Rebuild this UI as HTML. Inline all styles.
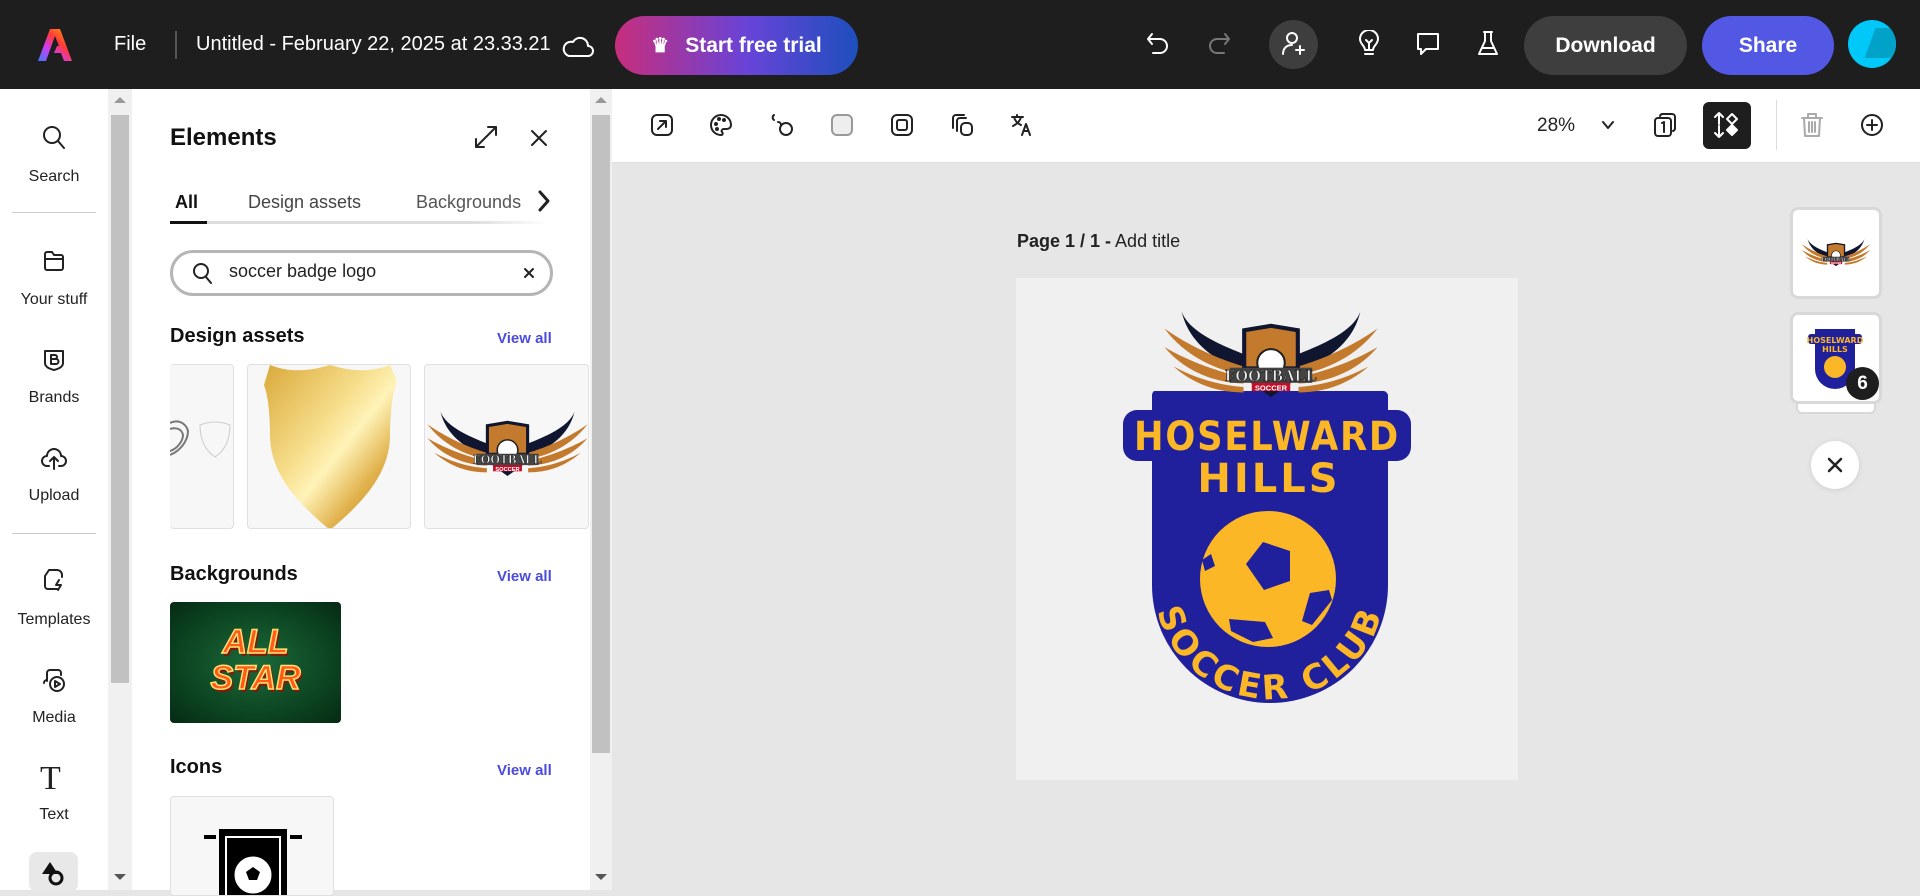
<!DOCTYPE html>
<html><head><meta charset="utf-8">
<style>
*{box-sizing:border-box;margin:0;padding:0}
body{width:1920px;height:890px;overflow:hidden;background:#e6e6e6;font-family:"Liberation Sans",sans-serif;position:relative;color:#222}
.a{position:absolute}
.top{left:0;top:0;width:1920px;height:89px;background:#1e1e1e}
.wt{color:#fff;font-size:20px}
.pill{border-radius:30px;height:59px;top:16px;display:flex;align-items:center;justify-content:center;color:#fff;font-size:21px;font-weight:bold}
.tb{left:612px;top:89px;width:1308px;height:74px;background:#fff;border-bottom:1px solid #ddd}
.rail{left:0;top:89px;width:108px;height:801px;background:#fff}
.lbl{width:108px;text-align:center;font-size:16px;color:#222}
.sb{background:#f0f0f0;width:24px}
.th{background:#c1c1c1}
.panel{left:132px;top:89px;width:458px;height:801px;background:#fff}
.h{font-size:20px;font-weight:bold;color:#111}
.va{font-size:15px;color:#4b4bdc;font-weight:bold}
.card{background:#f7f7f7;border:1px solid #e0e0e0;border-radius:4px;overflow:hidden}
svg.i{position:absolute;fill:none;stroke:#222;stroke-width:2;stroke-linecap:round;stroke-linejoin:round}
</style></head><body>
<svg width="0" height="0" style="position:absolute">
<defs>
<symbol id="emb" viewBox="0 0 320 130">
<path d="M30 0 C40 30 90 50 120 62 L118 84 C80 74 40 45 30 0Z" fill="#101530"/>
<path d="M290 0 C280 30 230 50 200 62 L202 84 C240 74 280 45 290 0Z" fill="#101530"/>
<path d="M5 25 C40 50 85 70 120 80 L120 92 C80 86 35 65 5 25Z M5 52 C45 75 85 88 120 96 L120 105 C80 104 35 88 5 52Z M18 80 C55 100 90 108 120 110 L120 118 C85 118 50 108 18 80Z" fill="#c47a2c"/>
<path d="M315 25 C280 50 235 70 200 80 L200 92 C240 86 285 65 315 25Z M315 52 C275 75 235 88 200 96 L200 105 C240 104 285 88 315 52Z M302 80 C265 100 230 108 200 110 L200 118 C235 118 270 108 302 80Z" fill="#c47a2c"/>
<path d="M118 25 L160 18 L202 25 L202 95 L160 125 L118 95Z" fill="#101530"/>
<path d="M124 30 L160 24 L196 30 L196 80 L124 80Z" fill="#c47a2c"/>
<circle cx="160" cy="75" r="20" fill="#fff" stroke="#222" stroke-width="3"/>
<rect x="100" y="82" width="120" height="22" fill="#444"/>
<text x="160" y="101" text-anchor="middle" font-family="Liberation Serif" font-weight="bold" font-size="24" fill="#eee" stroke="#222" stroke-width="1">FOOTBALL</text>
<rect x="132" y="104" width="56" height="12" fill="#c0102a"/>
<text x="160" y="115" text-anchor="middle" font-family="Liberation Sans" font-weight="bold" font-size="11" fill="#fff">SOCCER</text>
</symbol>
</defs></svg>

<!-- TOP BAR -->
<div class="a top"></div>
<svg class="a" style="left:36px;top:27px" width="38" height="36" viewBox="0 0 38 36"><defs><linearGradient id="lg" x1="0" y1="1" x2="1" y2="0"><stop offset="0" stop-color="#3d7bff"/><stop offset=".35" stop-color="#d23cf0"/><stop offset=".6" stop-color="#ff3a3a"/><stop offset="1" stop-color="#ffb400"/></linearGradient></defs><path d="M14 2h10l12 32h-8l-3-8h-7l3-7h2l-4-10-9 25H2Z" fill="url(#lg)"/></svg>
<div class="a wt" style="left:114px;top:33px">File</div>
<div class="a" style="left:175px;top:31px;width:2px;height:28px;background:#555"></div>
<div class="a wt" style="left:196px;top:33px">Untitled - February 22, 2025 at 23.33.21</div>
<svg class="i" style="left:561px;top:30px;stroke:#fff" width="34" height="30" viewBox="0 0 34 30"><path d="M8 26h19a5 5 0 0 0 0-10 8 8 0 0 0-15-4 6 6 0 0 0-4 14z"/></svg>
<div class="a pill" style="left:615px;width:243px;background:linear-gradient(90deg,#c72e7c,#6744d8 55%,#1e4fbd)"><span style="font-size:20px;margin-right:16px">♛</span>Start free trial</div>
<svg class="i" style="left:1144px;top:30px;stroke:#fff" width="28" height="28" viewBox="0 0 28 28"><path d="M8 4 4 9l4 5M4 9h12a7 7 0 0 1 0 14H9"/></svg>
<svg class="i" style="left:1205px;top:30px;stroke:#777" width="28" height="28" viewBox="0 0 28 28"><path d="M20 4l4 5-4 5M24 9H12a7 7 0 0 0 0 14h7"/></svg>
<div class="a" style="left:1269px;top:20px;width:49px;height:49px;border-radius:50%;background:#3e3e3e"></div>
<svg class="i" style="left:1280px;top:30px;stroke:#fff" width="28" height="28" viewBox="0 0 28 28"><circle cx="12" cy="8" r="5"/><path d="M3 24c0-6 4-9 9-9M20 16v8M16 20h8"/></svg>
<svg class="i" style="left:1356px;top:30px;stroke:#fff" width="26" height="30" viewBox="0 0 26 30"><path d="M9 24h8M9 20c0-4-5-6-5-11a9 9 0 0 1 18 0c0 5-5 7-5 11zM13 20v-7l-3-3M13 13l3-3"/></svg>
<svg class="i" style="left:1414px;top:30px;stroke:#fff" width="28" height="28" viewBox="0 0 28 28"><path d="M4 4h20v15H12l-5 5v-5H4z"/></svg>
<svg class="i" style="left:1475px;top:29px;stroke:#fff" width="26" height="30" viewBox="0 0 26 30"><path d="M9 3h8M10 3v9L4 25h18l-6-13V3M7 19h12"/></svg>
<div class="a pill" style="left:1524px;width:163px;background:#3e3e3e;font-weight:bold">Download</div>
<div class="a pill" style="left:1702px;width:132px;background:#5258e4">Share</div>
<div class="a" style="left:1848px;top:20px;width:48px;height:48px;border-radius:50%;background:#00c8f8;overflow:hidden"><div style="position:absolute;left:22px;top:8px;width:30px;height:30px;background:#00a2c8;transform:skewX(-20deg)"></div></div>

<!-- TOOLBAR -->
<div class="a tb"></div>
<svg class="i" style="left:649px;top:112px" width="26" height="26" viewBox="0 0 26 26"><rect x="3" y="3" width="20" height="20" rx="5"/><path d="M11 9h6v6M17 9l-8 8"/></svg>
<svg class="i" style="left:708px;top:112px" width="26" height="26" viewBox="0 0 26 26"><path d="M13 3a10 10 0 1 0 0 20c2 0 2-2 1-3s0-3 2-3h3a4 4 0 0 0 4-4c0-6-5-10-10-10z"/><circle cx="8" cy="12" r="1"/><circle cx="11" cy="7" r="1"/><circle cx="16" cy="8" r="1"/><circle cx="9" cy="17" r="1"/></svg>
<svg class="i" style="left:769px;top:112px" width="26" height="26" viewBox="0 0 26 26"><circle cx="17" cy="17" r="6"/><path d="M5 3a3 3 0 0 0 0 5M9 10a3 3 0 0 1 3 3"/></svg>
<svg class="i" style="left:829px;top:112px;stroke:#999;fill:#eee" width="26" height="26" viewBox="0 0 26 26"><rect x="3" y="3" width="20" height="20" rx="5"/></svg>
<svg class="i" style="left:889px;top:112px" width="26" height="26" viewBox="0 0 26 26"><rect x="3" y="3" width="20" height="20" rx="5"/><rect x="8" y="8" width="10" height="10" rx="2"/></svg>
<svg class="i" style="left:949px;top:112px" width="26" height="26" viewBox="0 0 26 26"><path d="M4 16V6a3 3 0 0 1 3-3h8"/><path d="M8 19V9a3 3 0 0 1 3-3h6"/><rect x="12" y="11" width="11" height="12" rx="4"/></svg>
<svg class="i" style="left:1009px;top:112px" width="26" height="26" viewBox="0 0 26 26"><path d="M3 5h11M8 3v2M5 5c1 4 4 7 7 8M12 5c-1 4-4 7-8 9M13 23l4-11 4 11M14.5 19h5"/></svg>
<div class="a" style="left:1537px;top:115px;font-size:19px;color:#222">28%</div>
<svg class="i" style="left:1600px;top:117px" width="16" height="16" viewBox="0 0 16 16"><path d="M3 5l5 6 5-6"/></svg>
<svg class="i" style="left:1651px;top:111px" width="28" height="28" viewBox="0 0 28 28"><path d="M9 5a3 3 0 0 1 3-2h9a3 3 0 0 1 3 3v11a3 3 0 0 1-2 3"/><rect x="4" y="7" width="16" height="18" rx="3"/><path d="M11 12l2-1v10"/></svg>
<div class="a" style="left:1703px;top:102px;width:48px;height:47px;border-radius:6px;background:#1e1e1e"></div>
<svg class="i" style="left:1712px;top:110px;stroke:#fff" width="30" height="30" viewBox="0 0 30 30"><path d="M7 3v11M3 7l4-4 4 4M7 16v11M3 23l4 4 4-4"/><path d="M20 4l5 5-5 5-5-5z" /><path d="M20 15l5 5-5 5-5-5z" fill="#fff"/></svg>
<div class="a" style="left:1776px;top:100px;width:1px;height:50px;background:#ddd"></div>
<svg class="i" style="left:1799px;top:111px;stroke:#aaa" width="26" height="28" viewBox="0 0 26 28"><path d="M3 7h20M9 7V3h8v4M5 7l1 18h14l1-18M10 11v10M13 11v10M16 11v10"/></svg>
<svg class="i" style="left:1859px;top:112px" width="26" height="26" viewBox="0 0 26 26"><circle cx="13" cy="13" r="10"/><path d="M13 8v10M8 13h10"/></svg>

<!-- LEFT RAIL -->
<div class="a rail"></div>
<svg class="i" style="left:40px;top:124px" width="28" height="28" viewBox="0 0 28 28"><circle cx="12" cy="11" r="8"/><path d="M18 17l6 7"/></svg>
<div class="a lbl" style="top:168px">Search</div>
<div class="a" style="left:12px;top:212px;width:84px;height:1px;background:#ccc"></div>
<svg class="i" style="left:41px;top:248px" width="26" height="26" viewBox="0 0 26 26"><path d="M4 6a2 2 0 0 1 2-2h5l2 3h7a2 2 0 0 1 2 2v11a2 2 0 0 1-2 2H6a2 2 0 0 1-2-2zM4 11h18"/></svg>
<div class="a lbl" style="top:291px">Your stuff</div>
<svg class="i" style="left:41px;top:347px" width="26" height="26" viewBox="0 0 26 26"><path d="M4 4h18v12c0 4-5 6-9 7-4-1-9-3-9-7z"/><path d="M10 8h4a2 2 0 0 1 0 4h-4zM10 12h5a2 2 0 0 1 0 5h-5zM10 8v9"/></svg>
<div class="a lbl" style="top:389px">Brands</div>
<svg class="i" style="left:40px;top:445px" width="28" height="26" viewBox="0 0 28 26"><path d="M9 21H7a5 5 0 0 1 0-10 7 7 0 0 1 14 0 5 5 0 0 1 0 10h-2M14 24V12M10 16l4-4 4 4"/></svg>
<div class="a lbl" style="top:487px">Upload</div>
<div class="a" style="left:12px;top:533px;width:84px;height:1px;background:#ccc"></div>
<svg class="i" style="left:41px;top:567px" width="26" height="26" viewBox="0 0 26 26"><path d="M8 3h8a5 5 0 0 1 5 5v2M4 9l4-6M4 9v10a3 3 0 0 0 3 3h9M18 13l-3 5h5l-3 5"/></svg>
<div class="a lbl" style="top:611px">Templates</div>
<svg class="i" style="left:41px;top:667px" width="26" height="26" viewBox="0 0 26 26"><path d="M6 14V6a3 3 0 0 1 3-3h8a3 3 0 0 1 3 3v2"/><path d="M3 16a3 3 0 0 1 3-3"/><circle cx="16" cy="17" r="7"/><path d="M14 14v6l5-3z"/></svg>
<div class="a lbl" style="top:709px">Media</div>
<div class="a" style="left:40px;top:760px;font-family:'Liberation Serif';font-size:34px;color:#222">T</div>
<div class="a lbl" style="top:806px">Text</div>
<div class="a" style="left:29px;top:852px;width:49px;height:40px;border-radius:8px;background:#e8e8e8"></div>
<svg class="a" style="left:40px;top:860px" width="26" height="26" viewBox="0 0 26 26"><path d="M10 2l8 12H2z" fill="#111"/><circle cx="16" cy="18" r="6" fill="none" stroke="#111" stroke-width="3"/></svg>

<!-- SCROLLBARS -->
<div class="a sb" style="left:108px;top:89px;height:801px"></div>
<div class="a th" style="left:111px;top:115px;width:18px;height:568px"></div>
<div class="a" style="left:114px;top:97px;width:0;height:0;border-left:6px solid transparent;border-right:6px solid transparent;border-bottom:6px solid #999"></div>
<div class="a" style="left:114px;top:874px;border-left:6px solid transparent;border-right:6px solid transparent;border-top:6px solid #555"></div>
<div class="a sb" style="left:590px;top:89px;height:801px;width:22px"></div>
<div class="a th" style="left:592px;top:115px;width:18px;height:638px"></div>
<div class="a" style="left:595px;top:97px;border-left:6px solid transparent;border-right:6px solid transparent;border-bottom:6px solid #999"></div>
<div class="a" style="left:595px;top:874px;border-left:6px solid transparent;border-right:6px solid transparent;border-top:6px solid #555"></div>

<!-- PANEL -->
<div class="a panel"></div>
<div class="a" style="left:170px;top:124px;font-size:24px;font-weight:bold;color:#111">Elements</div>
<svg class="i" style="left:472px;top:123px" width="28" height="28" viewBox="0 0 28 28"><path d="M4 24L24 4M16 4h8v8M4 16v8h8"/></svg>
<svg class="i" style="left:528px;top:127px" width="22" height="22" viewBox="0 0 22 22"><path d="M4 4l14 14M18 4L4 18"/></svg>
<div class="a" style="left:175px;top:192px;font-size:18px;font-weight:bold;color:#111">All</div>
<div class="a" style="left:248px;top:192px;font-size:18px;color:#444">Design assets</div>
<div class="a" style="left:416px;top:192px;font-size:18px;color:#555">Backgrounds</div>
<div class="a" style="left:520px;top:185px;width:24px;height:34px;background:linear-gradient(90deg,rgba(255,255,255,0),#fff)"></div>
<svg class="i" style="left:537px;top:189px;stroke-width:3" width="14" height="24" viewBox="0 0 14 24"><path d="M3 3l8 9-8 9"/></svg>
<div class="a" style="left:170px;top:221px;width:378px;height:3px;background:linear-gradient(90deg,#ddd 80%,#fff)"></div>
<div class="a" style="left:170px;top:221px;width:37px;height:3px;background:#111"></div>
<div class="a" style="left:170px;top:250px;width:383px;height:46px;border:3px solid #b5b5b5;border-radius:24px"></div>
<svg class="i" style="left:190px;top:261px" width="26" height="26" viewBox="0 0 26 26"><circle cx="11" cy="10" r="7"/><path d="M16 16l5 6"/></svg>
<div class="a" style="left:229px;top:261px;font-size:18px;color:#222">soccer badge logo</div>
<svg class="i" style="left:522px;top:266px" width="14" height="14" viewBox="0 0 14 14"><path d="M3 3l8 8M11 3l-8 8"/></svg>

<div class="a h" style="left:170px;top:325px">Design assets</div>
<div class="a va" style="left:497px;top:330px">View all</div>
<div class="a card" style="left:170px;top:364px;width:64px;height:165px;border-left:none"><svg width="64" height="165"><path d="M0 58c8-4 16 0 18 8 0 10-8 20-18 24M0 64c6-2 12 0 13 6 0 6-6 14-13 16" stroke="#777" fill="none" stroke-width="2"/><path d="M30 60c10-4 20-4 30 0 0 16-6 26-15 32-9-6-15-16-15-32z" stroke="#ccc" fill="none"/></svg></div>
<div class="a card" style="left:247px;top:364px;width:164px;height:165px"><svg width="164" height="165"><defs><linearGradient id="gd" x1="0" y1="0" x2="1" y2="1"><stop offset="0" stop-color="#d9a93a"/><stop offset=".4" stop-color="#f6dd8a"/><stop offset=".55" stop-color="#fff3b8"/><stop offset=".75" stop-color="#e0b04a"/><stop offset="1" stop-color="#b78420"/></linearGradient></defs><path d="M22 0c20 8 40 6 60 0 20 6 40 8 60 0 4 10 8 14 6 20-4 10-6 30-6 50 0 40-30 70-60 95-30-25-60-55-60-95 0-20-2-40-6-50z" fill="url(#gd)"/></svg></div>
<div class="a card" style="left:424px;top:364px;width:165px;height:165px"><svg width="165" height="165" viewBox="0 0 165 165"><use href="#emb" x="0" y="25" width="165" height="110"/></svg></div>

<div class="a h" style="left:170px;top:563px">Backgrounds</div>
<div class="a va" style="left:497px;top:568px">View all</div>
<div class="a" style="left:170px;top:602px;width:171px;height:121px;border-radius:4px;background:radial-gradient(ellipse at center,#1c6a3a,#0a3f1e 70%,#062a14);overflow:hidden">
<div style="position:absolute;left:0;width:171px;top:22px;text-align:center;font:italic bold 34px/36px 'Liberation Sans',sans-serif;color:#ff5a1a;-webkit-text-stroke:1.5px #ffe070;text-shadow:2px 3px 0 #7a1e08">ALL<br>STAR</div></div>

<div class="a h" style="left:170px;top:756px">Icons</div>
<div class="a va" style="left:497px;top:762px">View all</div>
<div class="a card" style="left:170px;top:796px;width:164px;height:100px"><svg width="164" height="100"><path d="M33 40h12M119 40h12" stroke="#000" stroke-width="4"/><rect x="48" y="32" width="68" height="80" fill="#000"/><rect x="55" y="40" width="54" height="70" fill="none" stroke="#fff" stroke-width="2"/><circle cx="82" cy="78" r="20" fill="#fff" stroke="#000" stroke-width="3"/><path d="M82 70l7 5-3 8h-8l-3-8z" fill="#000"/></svg></div>

<!-- CANVAS -->
<div class="a" style="left:1017px;top:231px;font-size:18px;color:#222"><b style="font-weight:bold">Page 1 / 1 -</b> Add title</div>
<div class="a" style="left:1016px;top:278px;width:502px;height:502px;background:#f0f0f0">
<svg width="502" height="502" viewBox="0 0 502 502">
<path d="M138 113h230a6 6 0 0 1 4 4v190a118 118 0 0 1-236 0V117a6 6 0 0 1 2-4z" fill="#21209c"/>
<rect x="107" y="132" width="288" height="51" rx="14" fill="#21209c"/>
<use href="#emb" x="145" y="22" width="220" height="112"/>
<g font-family="'DejaVu Sans',sans-serif" font-weight="bold" fill="#fbb726" text-anchor="middle">
<text x="251" y="172" font-size="40" letter-spacing="2" textLength="266" lengthAdjust="spacingAndGlyphs">HOSELWARD</text>
<text x="253" y="214" font-size="40" letter-spacing="3">HILLS</text>
</g>
<circle cx="252" cy="301" r="68" fill="#fbb726"/>
<path d="M230 265l-18 8 5-12z M282 244l8 10-12-2z M317 272l-3 14-4-12z" fill="#f0f0f0" opacity="0"/>
<path d="M247 264l27 9 0 30-26 9-18-26z" fill="#21209c"/>
<path d="M313 312l3 10-20 25-10-4 8-28z" fill="#21209c"/>
<path d="M213 341l36 3 8 16-20 4-22-11z" fill="#21209c"/>
<path d="M186 282l9-6 4 12-10 5z" fill="#21209c"/>
<defs><path id="arc" d="M138 305 A116 116 0 0 0 370 305"/></defs>
<text font-family="'DejaVu Sans',sans-serif" font-weight="bold" font-size="34" fill="#fbb726" letter-spacing="4"><textPath href="#arc" startOffset="50%" text-anchor="middle">SOCCER CLUB</textPath></text>
</svg></div>

<!-- RIGHT THUMBS -->
<div class="a" style="left:1790px;top:207px;width:92px;height:92px;background:#fff;border:3px solid #d8d8d8;border-radius:8px"><svg width="86" height="86"><use href="#emb" x="8" y="18" width="70" height="50"/></svg></div>
<div class="a" style="left:1796px;top:398px;width:80px;height:16px;background:#fff;border:2px solid #d8d8d8;border-radius:6px"></div>
<div class="a" style="left:1790px;top:312px;width:92px;height:92px;background:#fff;border:3px solid #d8d8d8;border-radius:8px">
<svg width="86" height="86" viewBox="0 0 86 86"><path d="M22 14h40v40a20 20 0 0 1-40 0z" fill="#21209c"/><rect x="15" y="19" width="54" height="10" rx="3" fill="#21209c"/><text x="42" y="28" text-anchor="middle" font-size="8" font-weight="bold" fill="#fbb726" font-family="'DejaVu Sans'">HOSELWARD</text><text x="42" y="37" text-anchor="middle" font-size="8" font-weight="bold" fill="#fbb726" font-family="'DejaVu Sans'">HILLS</text><circle cx="42" cy="52" r="11" fill="#fbb726"/></svg></div>
<div class="a" style="left:1846px;top:367px;width:33px;height:33px;border-radius:50%;background:#1e1e1e;color:#fff;font-size:19px;font-weight:bold;text-align:center;line-height:33px">6</div>
<div class="a" style="left:1811px;top:441px;width:48px;height:48px;border-radius:50%;background:#fff;box-shadow:0 1px 6px rgba(0,0,0,.1)"></div>
<svg class="i" style="left:1825px;top:455px;stroke-width:2.5" width="20" height="20" viewBox="0 0 20 20"><path d="M4 4l12 12M16 4L4 16"/></svg>
</body></html>
